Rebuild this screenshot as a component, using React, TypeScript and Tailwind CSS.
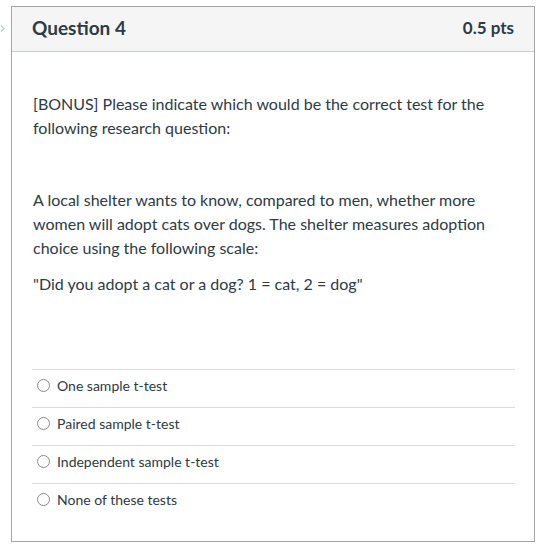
import React from "react";

const answers = [
  "One sample t-test",
  "Paired sample t-test",
  "Independent sample t-test",
  "None of these tests",
];

export default function App() {
  return (
    <div
      className="relative w-[547px] h-[548px] bg-white text-[#2d3b45]"
      style={{ fontFamily: "Lato, 'Open Sans', sans-serif" }}
    >
      <svg
        className="absolute left-0 top-[24px]"
        width="6"
        height="9"
        viewBox="0 0 6 9"
      >
        <path d="M1 1.5 L4 4.5 L1 7.5" fill="none" stroke="#b5c6d3" strokeWidth="1.2" />
      </svg>
      <div className="absolute left-[11px] top-[6px] w-[524px] h-[536px] border border-[#a5a5a5] flex flex-col">
        <div className="h-[45px] bg-[#f5f5f5] border-b border-[#c7cdd1] flex items-center justify-between pl-[20px] pr-[20px] pb-[4px]">
          <div className="text-[19px] font-bold leading-none">Question 4</div>
          <div className="text-[17px] font-bold leading-none">0.5 pts</div>
        </div>
        <div className="px-[21px] pt-[28px] text-[16px] leading-[24px]">
          <p className="my-[12px]">
            [BONUS] Please indicate which would be the correct test for the following research question:
          </p>
          <p className="my-[12px] h-[24px]"></p>
          <p className="my-[12px]">
            A local shelter wants to know, compared to men, whether more women will adopt cats over dogs. The shelter measures adoption choice using the following scale:
          </p>
          <p className="my-[12px]">"Did you adopt a cat or a dog? 1 = cat, 2 = dog"</p>
        </div>
        <div className="mt-[61px] pl-[20px] pr-[19px]">
          {answers.map((a) => (
            <div
              key={a}
              className="h-[38px] border-t border-[#dadada] flex items-center pl-[5px] gap-[7px] pb-[6px] text-[14px]"
            >
              <span className="w-[13px] h-[13px] rounded-full border border-[#8a8a8a] bg-white shrink-0" />
              <span className="leading-none">{a}</span>
            </div>
          ))}
        </div>
      </div>
    </div>
  );
}
